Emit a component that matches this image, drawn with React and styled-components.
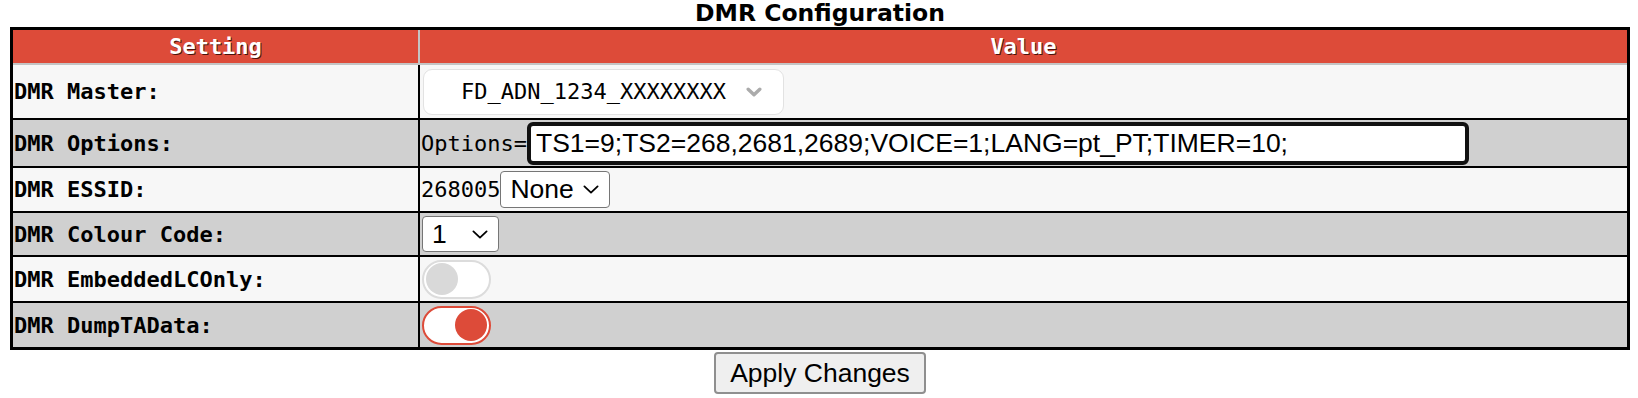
import React from "react";
import styled, { createGlobalStyle } from "styled-components";

const GlobalStyle = createGlobalStyle`
  body {
    margin: 0;
    background: #fff;
    font-family: "DejaVu Sans Mono", monospace;
  }
`;

const Page = styled.div`
  width: 1620px;
  margin-left: 10px;
  display: flex;
  flex-direction: column;
  align-items: center;
`;

const Title = styled.h2`
  margin: 0;
  height: 27px;
  line-height: 27px;
  font-family: "DejaVu Sans", Verdana, sans-serif;
  font-size: 23.5px;
  font-weight: 700;
  color: #000;
`;

const Table = styled.div`
  width: 100%;
  box-sizing: border-box;
  border: 3px solid #000;
  display: flex;
  flex-direction: column;
`;

const HeadRow = styled.div`
  display: grid;
  grid-template-columns: 407px 1fr;
  height: 33px;
  background: #dd4b39;
  border-bottom: 2px solid #c4c4c4;
`;

const HeadCell = styled.div`
  display: flex;
  align-items: center;
  justify-content: center;
  color: #fff;
  font-size: 22px;
  font-weight: 700;
  text-shadow: 1px 1px #4a120b;
  border-right: ${(p) => (p.$last ? "none" : "2px solid #c4c4c4")};
`;

const Row = styled.div`
  display: grid;
  grid-template-columns: 407px 1fr;
  height: ${(p) => p.$h}px;
  background: ${(p) => (p.$dark ? "#d0d0d0" : "#f7f7f7")};
  border-top: ${(p) => (p.$first ? "none" : "2px solid #000")};
`;

const Label = styled.div`
  display: flex;
  align-items: center;
  padding: 0 1px;
  border-right: 2px solid #000;
  font-size: 22px;
  font-weight: 700;
  color: #000;
  white-space: nowrap;
`;

const Value = styled.div`
  display: flex;
  align-items: center;
  padding: 0 1px;
  font-size: 22px;
  color: #000;
  white-space: nowrap;
`;

const MasterSelect = styled.div`
  box-sizing: border-box;
  margin-left: 2px;
  width: 361px;
  height: 46px;
  display: flex;
  align-items: center;
  padding: 0 21px 0 37px;
  border: 1px solid #e2e2e2;
  border-radius: 9px;
  background: #fff;
  font-size: 22px;
  & > svg {
    margin-left: auto;
  }
`;

const NativeSelect = styled.div`
  box-sizing: border-box;
  margin-left: ${(p) => p.$ml || 0}px;
  width: ${(p) => p.$w}px;
  height: ${(p) => p.$h}px;
  display: flex;
  align-items: center;
  justify-content: space-between;
  padding: 0 10px 0 9px;
  border: 1px solid #767676;
  border-radius: 4px;
  background: #fff;
  font-family: "Liberation Sans", Arial, sans-serif;
  font-size: 26.5px;
  color: #000;
`;

const OptionsInput = styled.input`
  box-sizing: border-box;
  width: 942px;
  height: 43px;
  border: 4px solid #111;
  border-radius: 6px;
  padding: 0 5px;
  background: #fff;
  font-family: "Liberation Sans", Arial, sans-serif;
  font-size: 26.5px;
  color: #000;
  outline: none;
`;

const Switch = styled.span`
  box-sizing: border-box;
  margin-left: 1px;
  width: 69px;
  height: 39px;
  display: flex;
  align-items: center;
  justify-content: ${(p) => (p.$on ? "flex-end" : "flex-start")};
  padding: 0 2px;
  border: 2px solid ${(p) => (p.$on ? "#dd4b39" : "#dcdcdc")};
  border-radius: 20px;
  background: #fff;
`;

const Knob = styled.span`
  width: 32px;
  height: 32px;
  border-radius: 50%;
  background: ${(p) => (p.$on ? "#dd4b39" : "#d9d9d9")};
`;

const ApplyButton = styled.button`
  box-sizing: border-box;
  margin-top: 2px;
  width: 212px;
  height: 42px;
  padding: 0;
  border: 2px solid #8f8f8f;
  border-radius: 4px;
  background: #efefef;
  font-family: "Liberation Sans", Arial, sans-serif;
  font-size: 26.5px;
  color: #000;
`;

function Chevron({ color = "#000", width = 16, height = 9, stroke = 1.8 }) {
  const p = stroke / 2 + 0.5;
  return (
    <svg width={width} height={height} viewBox={`0 0 ${width} ${height}`}>
      <polyline
        points={`${p},${p} ${width / 2},${height - p} ${width - p},${p}`}
        fill="none"
        stroke={color}
        strokeWidth={stroke}
        strokeLinecap="round"
        strokeLinejoin="round"
      />
    </svg>
  );
}

function Toggle({ on }) {
  return (
    <Switch $on={on} role="switch" aria-checked={on}>
      <Knob $on={on} />
    </Switch>
  );
}

export default function App() {
  return (
    <>
      <GlobalStyle />
      <Page>
        <Title>DMR Configuration</Title>
        <Table>
          <HeadRow>
            <HeadCell>Setting</HeadCell>
            <HeadCell $last>Value</HeadCell>
          </HeadRow>
          <Row $h={53} $first>
            <Label>DMR Master:</Label>
            <Value>
              <MasterSelect>
                FD_ADN_1234_XXXXXXXX
                <Chevron color="#ababab" width={16} height={10} stroke={3.4} />
              </MasterSelect>
            </Value>
          </Row>
          <Row $h={46} $dark>
            <Label>DMR Options:</Label>
            <Value>
              Options=
              <OptionsInput
                defaultValue="TS1=9;TS2=268,2681,2689;VOICE=1;LANG=pt_PT;TIMER=10;"
              />
            </Value>
          </Row>
          <Row $h={43}>
            <Label>DMR ESSID:</Label>
            <Value>
              268005
              <NativeSelect $w={110} $h={37}>
                None
                <Chevron />
              </NativeSelect>
            </Value>
          </Row>
          <Row $h={42} $dark>
            <Label>DMR Colour Code:</Label>
            <Value>
              <NativeSelect $w={77} $h={36} $ml={1}>
                1
                <Chevron />
              </NativeSelect>
            </Value>
          </Row>
          <Row $h={44}>
            <Label>DMR EmbeddedLCOnly:</Label>
            <Value>
              <Toggle on={false} />
            </Value>
          </Row>
          <Row $h={44} $dark>
            <Label>DMR DumpTAData:</Label>
            <Value>
              <Toggle on />
            </Value>
          </Row>
        </Table>
        <ApplyButton>Apply Changes</ApplyButton>
      </Page>
    </>
  );
}
